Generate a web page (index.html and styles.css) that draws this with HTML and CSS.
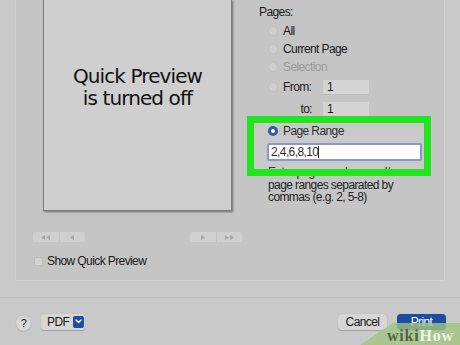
FILE: index.html
```html
<!DOCTYPE html>
<html lang="en">
<head>
<meta charset="utf-8">
<title>Print</title>
<link rel="stylesheet" href="styles.css">
</head>
<body>
<div class="window">
  <div class="main">
    <div class="sheet">
      <div class="preview-col">
        <div class="page"><p class="page-msg">Quick Preview<br>is turned off</p></div>
        <div class="nav">
          <div class="nav-group">
            <span class="seg"><svg width="9" height="5" viewBox="0 0 9 5"><path d="M4 0L0 2.5L4 5Z M9 0L5 2.5L9 5Z" /></svg></span>
            <span class="seg"><svg width="4" height="5" viewBox="0 0 4 5"><path d="M4 0L0 2.5L4 5Z" /></svg></span>
          </div>
          <div class="nav-group">
            <span class="seg"><svg width="4" height="5" viewBox="0 0 4 5"><path d="M0 0L4 2.5L0 5Z" /></svg></span>
            <span class="seg"><svg width="9" height="5" viewBox="0 0 9 5"><path d="M0 0L4 2.5L0 5Z M5 0L9 2.5L5 5Z" /></svg></span>
          </div>
        </div>
        <div class="check-row"><span class="checkbox"></span><span>Show Quick Preview</span></div>
      </div>
      <div class="settings">
        <div class="group-label">Pages:</div>
        <div class="radio-row first"><span class="radio"></span><span>All</span></div>
        <div class="radio-row"><span class="radio"></span><span>Current Page</span></div>
        <div class="radio-row short disabled"><span class="radio"></span><span>Selection</span></div>
        <div class="radio-row field-row"><span class="radio"></span><span class="field-label">From:</span><span class="field">1</span></div>
        <div class="radio-row field-row"><span class="radio-space"></span><span class="field-label right">to:</span><span class="field">1</span></div>
        <div class="radio-row field-row"><span class="radio on"></span><span>Page Range</span></div>
        <div class="range-input"><span>2,4,6,8,10</span><span class="caret"></span></div>
        <p class="help">Enter page numbers and/or page ranges separated by commas (e.g. 2, 5-8)</p>
        <div class="highlight"></div>
      </div>
    </div>
  </div>
  <div class="footer">
    <span class="help-btn">?</span>
    <span class="pdf-btn"><span>PDF</span><span class="pdf-arrow"><svg width="7" height="5" viewBox="0 0 7 5"><path d="M1 1L3.5 3.5L6 1" fill="none" stroke="#fff" stroke-width="1.4" stroke-linecap="round" stroke-linejoin="round"/></svg></span></span>
    <span class="spacer"></span>
    <span class="btn">Cancel</span>
    <span class="btn primary">Print</span>
  </div>
  <div class="watermark">
    <svg class="wm-shape" width="100" height="22" viewBox="0 0 100 22"><polygon points="0,22 33,0 100,0 100,22" /></svg>
    <span class="wm-text"><span class="wm-wiki">wiki</span><span class="wm-how">How</span></span>
  </div>
</div>
</body>
</html>
```

FILE: styles.css
```css
html, body {
  margin: 0;
  padding: 0;
}
body {
  width: 460px;
  height: 345px;
  overflow: hidden;
  background: #c9c9c9;
  font-family: "Liberation Sans", Arial, sans-serif;
  font-size: 12px;
  letter-spacing: -0.6px;
  color: #1a1a1a;
}
.window {
  position: relative;
  width: 460px;
  height: 345px;
}
.main {
  height: 297px;
  border-bottom: 1px solid #bdbdbd;
}
.sheet {
  margin-left: 15px;
  width: 430px;
  height: 281px;
  box-sizing: border-box;
  border: 1px solid #d1d1d1;
  border-top: 0;
  background: #c5c5c5;
  display: flex;
}
.preview-col {
  width: 243px;
  flex: none;
  padding-left: 17px;
  box-sizing: border-box;
  display: flex;
  flex-direction: column;
  align-items: flex-start;
}
.page {
  margin-left: 10px;
  width: 189px;
  height: 211px;
  box-sizing: border-box;
  background: #cfcfcf;
  border: 1px solid #7c7c7c;
  border-top: 0;
  box-shadow: 1px 1px 2px rgba(0, 0, 0, 0.45);
  display: flex;
  flex-direction: column;
  align-items: center;
  padding-top: 65px;
}
.page-msg {
  margin: 0;
  font-family: "DejaVu Sans", sans-serif;
  font-size: 20px;
  line-height: 22px;
  letter-spacing: -0.9px;
  text-align: center;
  color: #111;
}
.nav {
  margin-top: 21px;
  width: 209px;
  display: flex;
  justify-content: space-between;
}
.nav-group {
  display: flex;
  width: 52px;
  height: 10px;
  background: #d0d0d0;
  border-radius: 2px;
}
.seg {
  flex: 1;
  display: flex;
  align-items: center;
  justify-content: center;
}
.seg + .seg {
  border-left: 1px solid #c3c3c3;
}
.seg svg {
  fill: #a6a6a6;
}
.check-row {
  margin-top: 14px;
  margin-left: 1px;
  height: 10px;
  display: flex;
  align-items: center;
  gap: 4px;
}
.checkbox {
  width: 9px;
  height: 9px;
  box-sizing: border-box;
  background: #d2d2d2;
  border: 1px solid #bcbcbc;
  border-radius: 2px;
}
.settings {
  position: relative;
  flex: 1;
  padding-top: 5px;
}
.group-label {
  height: 15px;
  line-height: 15px;
}
.radio-row {
  height: 18px;
  padding-left: 9px;
  display: flex;
  align-items: center;
  gap: 5px;
}
.radio-row.first {
  margin-top: 2px;
}
.radio-row.short {
  height: 17px;
}
.radio-row.field-row {
  height: 20px;
  margin-top: 2px;
}
.disabled {
  color: #9b9b9b;
}
.radio, .radio-space {
  width: 10px;
  height: 10px;
  flex: none;
  box-sizing: border-box;
  border-radius: 50%;
}
.radio {
  background: #cfcfcf;
  border: 1px solid #c0c0c0;
}
.radio.on {
  background: #fff;
  border: 3px solid #1f4f9e;
}
.field-label {
  width: 29px;
}
.field-label.right {
  text-align: right;
}
.field {
  margin-left: 6px;
  width: 46px;
  height: 14px;
  box-sizing: border-box;
  padding-left: 4px;
  line-height: 14px;
  background: #d4d4d4;
  box-shadow: 0 1px 0 #bdbdbd;
}
.range-input {
  margin-top: 2px;
  margin-left: 8px;
  width: 155px;
  height: 18px;
  box-sizing: border-box;
  border: 2px solid #7b92c6;
  border-radius: 2px;
  background: #fff;
  padding-left: 2px;
  display: flex;
  align-items: center;
}
.caret {
  width: 1px;
  height: 12px;
  background: #111;
}
.help {
  margin: 5px 0 0 9px;
  width: 140px;
  line-height: 12.5px;
  color: #222;
}
.highlight {
  position: absolute;
  left: -12px;
  top: 116px;
  width: 184px;
  height: 60px;
  box-sizing: border-box;
  border: 7px solid #22e41f;
  background: rgba(255, 255, 255, 0.08);
}
.footer {
  height: 47px;
  display: flex;
  align-items: center;
  padding: 0 14px 0 16px;
}
.help-btn {
  width: 15px;
  height: 15px;
  margin-top: 3px;
  margin-right: 10px;
  border-radius: 50%;
  background: #d8d8d8;
  box-shadow: 0 0.5px 1px rgba(0, 0, 0, 0.25);
  display: flex;
  align-items: center;
  justify-content: center;
  font-size: 11px;
}
.pdf-btn {
  width: 44px;
  height: 16px;
  box-sizing: border-box;
  border-radius: 3px;
  background: #d6d6d6;
  box-shadow: 0 0.5px 1px rgba(0, 0, 0, 0.2);
  padding: 0 1px 0 6px;
  display: flex;
  align-items: center;
  justify-content: space-between;
}
.pdf-arrow {
  width: 11px;
  height: 12px;
  border-radius: 2px;
  background: #1d4ea6;
  display: flex;
  align-items: center;
  justify-content: center;
}
.spacer {
  flex: 1;
}
.btn {
  width: 49px;
  height: 16px;
  border-radius: 4px;
  background: #d6d6d6;
  box-shadow: 0 0.5px 1px rgba(0, 0, 0, 0.2);
  display: flex;
  align-items: center;
  justify-content: center;
}
.btn.primary {
  margin-left: 10px;
  background: #1c4da1;
  color: #fff;
}
.watermark {
  position: absolute;
  right: 0;
  bottom: 0;
  width: 100px;
  height: 22px;
}
.wm-shape {
  display: block;
  fill: rgba(160, 198, 128, 0.8);
}
.wm-text {
  position: absolute;
  left: 27px;
  top: 7px;
  font-family: "Liberation Serif", serif;
  font-weight: bold;
  font-size: 16px;
  line-height: 11px;
  letter-spacing: 0.8px;
}
.wm-wiki {
  color: #5a5f52;
}
.wm-how {
  color: #eef2e8;
}
```
